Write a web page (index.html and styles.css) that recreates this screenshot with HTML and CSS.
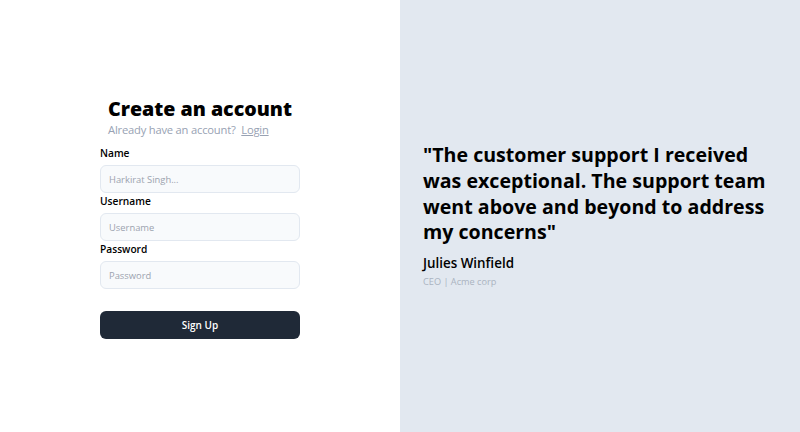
FILE: index.html
```html
<!DOCTYPE html>
<html lang="en">
<head>
<meta charset="utf-8">
<title>Sign up</title>
<link rel="stylesheet" href="styles.css">
</head>
<body>
<div class="page">
  <section class="left">
    <div class="form">
      <div class="header">
        <h1 class="title">Create an account</h1>
        <p class="subtitle">Already have an account? <a class="login" href="#">Login</a></p>
      </div>
      <div class="fields">
        <div class="field">
          <label class="label" for="name">Name</label>
          <input class="input" id="name" type="text" placeholder="Harkirat Singh...">
        </div>
        <div class="field">
          <label class="label" for="username">Username</label>
          <input class="input" id="username" type="text" placeholder="Username">
        </div>
        <div class="field">
          <label class="label" for="password">Password</label>
          <input class="input" id="password" type="password" placeholder="Password">
        </div>
      </div>
      <button class="button" type="button">Sign Up</button>
    </div>
  </section>
  <section class="right">
    <div class="quote">
      <p class="quote-text">"The customer support I received was exceptional. The support team went above and beyond to address my concerns"</p>
      <p class="author">Julies Winfield</p>
      <p class="role">CEO | Acme corp</p>
    </div>
  </section>
</div>
</body>
</html>
```
FILE: styles.css
```css
* { box-sizing: border-box; }
html, body { margin: 0; padding: 0; }
body {
  font-family: "Open Sans", "Noto Sans", "Liberation Sans", sans-serif;
  color: #000;
  background: #fff;
}
.page {
  display: grid;
  grid-template-columns: 400px 400px;
  height: 432px;
}
.left {
  background: #fff;
  display: flex;
  align-items: center;
  justify-content: center;
  padding-top: 3px;
}
.form {
  width: 200px;
  display: flex;
  flex-direction: column;
}
.header {
  align-self: center;
  text-align: left;
}
.title {
  margin: 0;
  font-size: 19.6px;
  line-height: 26px;
  font-weight: 800;
}
.subtitle {
  margin: 0;
  font-size: 11.2px;
  line-height: 16px;
  color: #98a2b3;
  letter-spacing: -0.2px;
  white-space: nowrap;
}
.login {
  color: #98a2b3;
  text-decoration: underline;
  margin-left: 3px;
}
.fields {
  margin-top: 7px;
  display: flex;
  flex-direction: column;
}
.field {
  display: flex;
  flex-direction: column;
}
.label {
  font-size: 10.2px;
  line-height: 16px;
  font-weight: 600;
  color: #000;
  margin-bottom: 4px;
}
.input {
  height: 28px;
  width: 100%;
  border: 1px solid #e2e8f0;
  border-radius: 6px;
  background: #f8fafc;
  padding: 0 8px;
  font-family: inherit;
  font-size: 9.4px;
  color: #111827;
  outline: none;
}
.input::placeholder {
  color: #9ca3af;
}
.button {
  margin-top: 22px;
  height: 28px;
  width: 100%;
  border: none;
  border-radius: 6px;
  background: #1f2937;
  color: #fff;
  font-family: inherit;
  font-size: 10px;
  font-weight: 600;
}
.right {
  background: #e2e8f0;
  display: flex;
  align-items: center;
  padding: 0 23px;
}
.quote {
  width: 350px;
}
.quote-text {
  margin: 0;
  font-size: 19.6px;
  line-height: 25.6px;
  font-weight: 700;
  color: #000;
}
.author {
  margin: 7px 0 0;
  font-size: 13.4px;
  line-height: 22px;
  font-weight: 600;
  color: #000;
}
.role {
  margin: 0;
  font-size: 9.2px;
  line-height: 16px;
  color: #aab3c0;
}
```
